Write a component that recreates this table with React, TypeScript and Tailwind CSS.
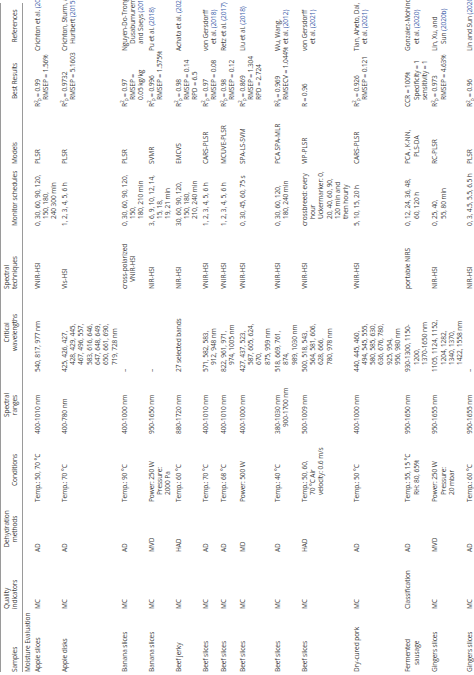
import React from "react";

type Line = React.ReactNode;

const Ref = ({ name, year }: { name: string; year: string }) => (
  <span>
    {name}
    <span className="text-[#3659a8]">({year})</span>
  </span>
);

const R2 = ({ sub, val }: { sub: string; val: string }) => (
  <span className="whitespace-pre">
    R<sup className="text-[4.8px]">2</sup>
    <sub className="text-[4.8px] -ml-[1px]">{sub}</sub>
    {` = ${val}`}
  </span>
);

type Row = Line[][];

const cols = "grid grid-cols-[63px_57px_50px_68px_62px_83px_63px_62px_57px_56px_54px]";

const rows: Row[] = [
  [
    ["Apple slices"],
    ["MC"],
    ["AD"],
    ["Temp.: 50, 70 °C"],
    ["400-1010 nm"],
    ["540, 817, 977 nm"],
    ["VNIR-HSI"],
    ["0, 30, 60, 90, 120,", "150, 180,", "240 300 min"],
    ["PLSR"],
    [<R2 sub="p" val="0.99" />, "RMSEP = 1.56%"],
    [<Ref name="Crichton et al. " year="2018" />],
  ],
  [
    ["Apple disks"],
    ["MC"],
    ["AD"],
    ["Temp.: 70 °C"],
    ["400-780 nm"],
    ["425, 426, 427,", "428, 429, 445,", "467, 496, 557,", "583, 616, 646,", "647, 648, 649,", "650, 661, 690,", "719, 728 nm"],
    ["Vis-HSI"],
    ["1, 2, 3, 4, 5, 6 h"],
    ["PLSR"],
    [<R2 sub="p" val="0.9732" />, "RMSEP = 5.1603"],
    ["Crichton, Sturm, and", <Ref name="Hurlbert " year="2015" />],
  ],
  [
    ["Banana slices"],
    ["MC"],
    ["AD"],
    ["Temp.: 90 °C"],
    ["400-1000 nm"],
    ["–"],
    ["cross-polarized", "VNIR-HSI"],
    ["0, 30, 60, 90, 120,", "150,", "180, 210 min"],
    ["PLSR"],
    [<R2 sub="p" val="0.97" />, "RMSEP =", "0.05 kg/kg"],
    ["Nguyen-Do-Trong,", "Dusabumuremyi,", <Ref name="and Saeys " year="2018" />],
  ],
  [
    ["Banana slices"],
    ["MC"],
    ["MVD"],
    ["Power: 250 W", "Pressure:", "2000 Pa"],
    ["950-1650 nm"],
    ["–"],
    ["NIR-HSI"],
    ["3, 6, 9, 10, 12, 14,", "15, 18,", "19, 21 min"],
    ["SVMR"],
    [<R2 sub="p" val="0.996" />, "RMSEP = 1.575%"],
    [<Ref name="Pu et al. " year="2018" />],
  ],
  [
    ["Beef jerky"],
    ["MC"],
    ["HAD"],
    ["Temp.: 60 °C"],
    ["880-1720 nm"],
    ["27 selected bands"],
    ["NIR-HSI"],
    ["30, 60, 90, 120,", "150, 180,", "210, 240 min"],
    ["EMCVS"],
    [<R2 sub="p" val="0.98" />, "RMSEP = 0.14", "RPD = 6.5"],
    [<Ref name="Achata et al. " year="2021" />],
  ],
  [
    ["Beef slices"],
    ["MC"],
    ["AD"],
    ["Temp.: 70 °C"],
    ["400-1010 nm"],
    ["571, 582, 583,", "912, 948 nm"],
    ["VNIR-HSI"],
    ["1, 2, 3, 4, 5, 6 h"],
    ["CARS-PLSR"],
    [<R2 sub="p" val="0.97" />, "RMSEP = 0.08"],
    ["von Gersdorff", <Ref name="et al. " year="2018" />],
  ],
  [
    ["Beef slices"],
    ["MC"],
    ["AD"],
    ["Temp.: 68 °C"],
    ["400-1010 nm"],
    ["822, 961, 971,", "974, 1005 nm"],
    ["VNIR-HSI"],
    ["1, 2, 3, 4, 5, 6 h"],
    ["MCUVE-PLSR"],
    [<R2 sub="p" val="0.98" />, "RMSEP = 0.12"],
    [<Ref name="Retz et al. " year="2017" />],
  ],
  [
    ["Beef slices"],
    ["MC"],
    ["MD"],
    ["Power: 500 W"],
    ["400-1000 nm"],
    ["427, 437, 523,", "587, 605, 624,", "670,", "875, 959 nm"],
    ["VNIR-HSI"],
    ["0, 30, 45, 60, 75 s"],
    ["SPA-LS-SVM"],
    [<R2 sub="p" val="0.869" />, "RMSEP = 1.304", "RPD = 2.724"],
    [<Ref name="Liu et al. " year="2018" />],
  ],
  [
    ["Beef slices"],
    ["MC"],
    ["AD"],
    ["Temp.: 40 °C"],
    ["380-1030 nm", "900-1700 nm"],
    ["518, 669, 761,", "874,", "989, 1030 nm"],
    ["VNIR-HSI"],
    ["0, 30, 60, 120,", "180, 240 min"],
    ["PCA SPA-MLR"],
    [<R2 sub="v" val="0.969" />, "RMSECV = 1.044%"],
    ["Wu, Wang,", <Ref name="et al. " year="2012" />],
  ],
  [
    ["Beef slices"],
    ["MC"],
    ["HAD"],
    ["Temp.: 50, 60,", "70 °C Air", "velocity: 0.6 m/s"],
    ["500-1009 nm"],
    ["500, 518, 543,", "564, 581, 606,", "628, 666,", "780, 978 nm"],
    ["VNIR-HSI"],
    ["crossbreed: every", "hour", "Uckermarker: 0,", "20, 40, 60, 90,", "120 min and", "then hourly"],
    ["VIP-PLSR"],
    ["R = 0.96"],
    ["von Gersdorff", <Ref name="et al. " year="2021" />],
  ],
  [
    ["Dry-cured pork"],
    ["MC"],
    ["AD"],
    ["Temp.: 50 °C"],
    ["400-1000 nm"],
    ["440, 445, 460,", "494, 545, 555,", "580, 585, 630,", "636, 676, 780,", "925, 954,", "956, 980 nm"],
    ["VNIR-HSI"],
    ["5, 10, 15, 20 h"],
    ["CARS-PLSR"],
    [<R2 sub="p" val="0.926" />, "RMSEP = 0.121"],
    ["Tian, Aheto, Dai,", <Ref name="et al. " year="2021" />],
  ],
  [
    ["Fermented", "sausage"],
    ["Classification"],
    ["AD"],
    ["Temp.: 55, 15 °C", "RH: 80, 65%"],
    ["950-1650 nm"],
    ["930-1300, 1150-", "1200,", "1370-1650 nm"],
    ["portable NIRS"],
    ["0, 12, 24, 36, 48,", "60, 120 h"],
    ["PCA , K-NN,", "PLS-DA"],
    ["CCR = 100%", "Specificity = 1", "sensitivity = 1"],
    ["Gonzalez-Mohino", <Ref name="et al. " year="2020" />],
  ],
  [
    ["Gingers slices"],
    ["MC"],
    ["MVD"],
    ["Power: 250 W", "Pressure:", "20 mbar"],
    ["950-1655 nm"],
    ["1105, 1124, 1152,", "1204, 1282,", "1340, 1370,", "1422, 1558 nm"],
    ["NIR-HSI"],
    ["0, 25, 40,", "55, 80 min"],
    ["RC-PLSR"],
    [<R2 sub="p" val="0.973" />, "RMSEP = 4.63%"],
    ["Lin, Xu, and", <Ref name="Sun " year="2020b" />],
  ],
  [
    ["Gingers slices"],
    ["MC"],
    ["AD"],
    ["Temp.: 60 °C"],
    ["950-1655 nm"],
    ["–"],
    ["NIR-HSI"],
    ["0, 3, 4.5, 5.5, 6.5 h"],
    ["PLSR"],
    [<R2 sub="p" val="0.96" />, "RMSEP = 5.74%"],
    [<Ref name="Lin and Sun " year="2020b" />],
  ],
];

const headers: { lines: string[]; align: string }[] = [
  { lines: ["Samples"], align: "text-left" },
  { lines: ["Quality", "indicators"], align: "text-left" },
  { lines: ["Dehydration", "methods"], align: "text-center" },
  { lines: ["Conditions"], align: "text-center" },
  { lines: ["Spectral", "ranges"], align: "text-center" },
  { lines: ["Critical", "wavelengths"], align: "text-center" },
  { lines: ["Spectral", "techniques"], align: "text-left" },
  { lines: ["Monitor schedules"], align: "text-left" },
  { lines: ["Models"], align: "text-left" },
  { lines: ["Best Results"], align: "text-center" },
  { lines: ["References"], align: "text-center" },
];

function Cell({ lines }: { lines: Line[] }) {
  return (
    <div className="flex flex-col whitespace-nowrap">
      {lines.map((l, i) => (
        <div key={i} className={i === 0 ? "" : "pl-[7px]"}>
          {l}
        </div>
      ))}
    </div>
  );
}

export default function App() {
  return (
    <div className="w-[474px] h-[675px] overflow-hidden bg-white">
      <div
        className="w-[675px] h-[474px] origin-top-left -rotate-90 translate-y-[675px] text-[6.6px] leading-[8.3px] tracking-[-0.1px] text-[#3c3c3c] px-[3px]"
        style={{ fontFamily: '"Open Sans", "Liberation Sans", sans-serif' }}
      >
        <div className="border-t border-[#9a9a9a] pt-[2px]">
          <div className={`${cols} items-end pb-[2px] border-b border-[#9a9a9a]`}>
            {headers.map((h, i) => (
              <div key={i} className={`flex flex-col ${h.align} pr-[4px]`}>
                {h.lines.map((l, j) => (
                  <div key={j}>{l}</div>
                ))}
              </div>
            ))}
          </div>
          <div className="py-[1px]">Moisture Evaluation</div>
          {rows.map((r, i) => (
            <div key={i} className={`${cols} py-[1px]`}>
              {r.map((c, j) => (
                <Cell key={j} lines={c} />
              ))}
            </div>
          ))}
        </div>
      </div>
    </div>
  );
}
